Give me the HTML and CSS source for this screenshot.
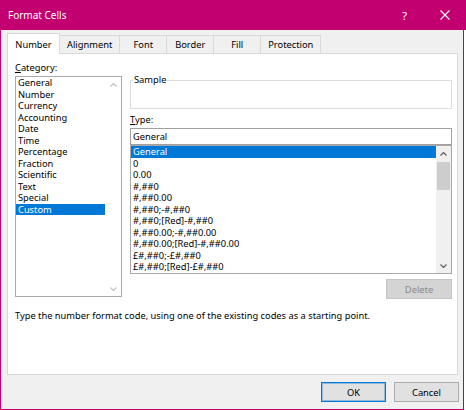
FILE: index.html
```html
<!DOCTYPE html>
<html>
<head>
<meta charset="utf-8">
<title>Format Cells</title>
<link rel="stylesheet" href="styles.css">
</head>
<body>
<div class="titlebar">
  <span class="title">Format Cells</span>
  <span class="help">?</span>
  <span class="close"><svg width="10" height="10" viewBox="0 0 10 10"><path d="M0.5 0.5L9.5 9.5M9.5 0.5L0.5 9.5" stroke="#fff" stroke-width="1.1" fill="none"/></svg></span>
</div>
<div class="frame">
  <div class="tabs">
    <div class="tab active">Number</div>
    <div class="tab">Alignment</div>
    <div class="tab">Font</div>
    <div class="tab">Border</div>
    <div class="tab">Fill</div>
    <div class="tab">Protection</div>
  </div>
  <div class="panel">
    <div class="columns">
      <div class="col-left">
        <div class="label"><u>C</u>ategory:</div>
        <div class="list cat-list">
          <div class="items">
            <div class="item">General</div>
            <div class="item">Number</div>
            <div class="item">Currency</div>
            <div class="item">Accounting</div>
            <div class="item">Date</div>
            <div class="item">Time</div>
            <div class="item">Percentage</div>
            <div class="item">Fraction</div>
            <div class="item">Scientific</div>
            <div class="item">Text</div>
            <div class="item">Special</div>
            <div class="item selected">Custom</div>
          </div>
          <div class="scrollbar plain">
            <div class="arrow"><svg width="7" height="4" viewBox="0 0 7 4"><polyline points="0.5,3.5 3.5,0.5 6.5,3.5" fill="none" stroke="#c2c2c2" stroke-width="1.2"/></svg></div>
            <div class="track"></div>
            <div class="arrow"><svg width="7" height="4" viewBox="0 0 7 4"><polyline points="0.5,0.5 3.5,3.5 6.5,0.5" fill="none" stroke="#c2c2c2" stroke-width="1.2"/></svg></div>
          </div>
        </div>
      </div>
      <div class="col-right">
        <fieldset class="sample"><legend>Sample</legend></fieldset>
        <div class="label type-label"><u>T</u>ype:</div>
        <div class="input">General</div>
        <div class="list type-list">
          <div class="items">
            <div class="item selected">General</div>
            <div class="item">0</div>
            <div class="item">0.00</div>
            <div class="item">#,##0</div>
            <div class="item">#,##0.00</div>
            <div class="item">#,##0;-#,##0</div>
            <div class="item">#,##0;[Red]-#,##0</div>
            <div class="item">#,##0.00;-#,##0.00</div>
            <div class="item">#,##0.00;[Red]-#,##0.00</div>
            <div class="item">£#,##0;-£#,##0</div>
            <div class="item">£#,##0;[Red]-£#,##0</div>
          </div>
          <div class="scrollbar active">
            <div class="arrow"><svg width="7" height="4" viewBox="0 0 7 4"><polyline points="0.5,3.5 3.5,0.5 6.5,3.5" fill="none" stroke="#606060" stroke-width="1.2"/></svg></div>
            <div class="track"><div class="thumb"></div></div>
            <div class="arrow"><svg width="7" height="4" viewBox="0 0 7 4"><polyline points="0.5,0.5 3.5,3.5 6.5,0.5" fill="none" stroke="#606060" stroke-width="1.2"/></svg></div>
          </div>
        </div>
        <div class="btn-row"><button class="btn disabled" disabled>Delete</button></div>
      </div>
    </div>
    <p class="desc">Type the number format code, using one of the existing codes as a starting point.</p>
  </div>
  <div class="footer">
    <button class="btn default">OK</button>
    <button class="btn">Cancel</button>
  </div>
</div>
</body>
</html>
```

FILE: styles.css
```css
html, body {
  margin: 0;
  padding: 0;
}
body {
  width: 466px;
  height: 410px;
  overflow: hidden;
  background: #ffffff;
  font-family: "Noto Sans", "Open Sans", sans-serif;
  font-size: 9.3px;
  color: #000;
}
.titlebar {
  height: 30px;
  background: #c2006f;
  color: #fff;
  display: flex;
  align-items: center;
  padding: 0 16px 0 8px;
  font-size: 10px;
}
.help {
  margin-left: auto;
  margin-right: 33px;
  font-size: 11px;
}
.close {
  display: flex;
}
.frame {
  width: 464px;
  height: 380px;
  box-sizing: border-box;
  border: 1px solid #c2006f;
  border-top: 0;
  background: #f0f0f0;
  padding: 3px 5px 0 6px;
  display: flex;
  flex-direction: column;
}
.tabs {
  display: flex;
  align-items: flex-end;
  height: 20px;
}
.tab {
  height: 18px;
  box-sizing: border-box;
  min-width: 48px;
  padding: 0 7px;
  border: 1px solid #d9d9d9;
  border-bottom: 0;
  margin-left: -1px;
  background: #f0f0f0;
  display: flex;
  align-items: center;
  justify-content: center;
  white-space: nowrap;
}
.tab:first-child {
  margin-left: 0;
}
.tab.active {
  height: 21px;
  margin-bottom: -1px;
  background: #fff;
  position: relative;
  z-index: 1;
  min-width: 53px;
}
.panel {
  background: #fff;
  border: 1px solid #d9d9d9;
  height: 322px;
  box-sizing: border-box;
  padding: 8px 5px 0 7px;
}
.columns {
  display: flex;
  gap: 8px;
  align-items: flex-start;
}
.col-left {
  width: 107px;
  display: flex;
  flex-direction: column;
}
.col-right {
  width: 322px;
  display: flex;
  flex-direction: column;
}
.label {
  height: 12px;
  line-height: 12px;
  margin-bottom: 2px;
}
.list {
  display: flex;
  box-sizing: border-box;
  border: 1px solid #a9a9a9;
  background: #fff;
}
.cat-list {
  height: 221px;
}
.items {
  flex: 1;
  min-width: 0;
}
.item {
  height: 11.5px;
  line-height: 11.5px;
  padding-left: 2px;
  white-space: nowrap;
  overflow: hidden;
}
.item.selected {
  background: #0078d7;
  color: #fff;
}
.scrollbar {
  display: flex;
  flex-direction: column;
}
.scrollbar.plain {
  width: 16px;
}
.scrollbar.active {
  width: 15px;
  background: #f0f0f0;
}
.arrow {
  height: 15px;
  display: flex;
  align-items: center;
  justify-content: center;
}
.track {
  flex: 1;
}
.thumb {
  margin: 1px auto 0;
  width: 13px;
  height: 28px;
  background: #cdcdcd;
}
.sample {
  margin: 12px 0 0;
  padding: 0 0 0 2px;
  border: 1px solid #dcdcdc;
  height: 35px;
  box-sizing: border-box;
  min-inline-size: 0;
}
.sample legend {
  padding: 0 1px;
  line-height: 12px;
  height: 12px;
}
.type-label {
  margin-top: 5px;
}
.input {
  height: 17px;
  box-sizing: border-box;
  border: 1px solid #a0a0a0;
  padding-left: 2px;
  line-height: 15px;
}
.type-list {
  height: 129px;
}
.btn-row {
  display: flex;
  justify-content: flex-end;
  margin-top: 5px;
}
.btn {
  font: inherit;
  color: #000;
  height: 20px;
  width: 65px;
  box-sizing: border-box;
  border: 1px solid #adadad;
  background: #e1e1e1;
  padding: 0;
}
.btn.disabled {
  width: 66px;
  background: #d4d4d4;
  border-color: #c4c4c4;
  color: #8a8a8a;
}
.btn.default {
  border-color: #0078d7;
  box-shadow: inset 0 0 0 1px rgba(0, 120, 215, 0.35);
}
.desc {
  margin: 11px 0 0;
  line-height: 12px;
  white-space: nowrap;
}
.footer {
  display: flex;
  justify-content: flex-end;
  gap: 8px;
  padding-top: 7px;
  margin-right: -1px;
}
```
